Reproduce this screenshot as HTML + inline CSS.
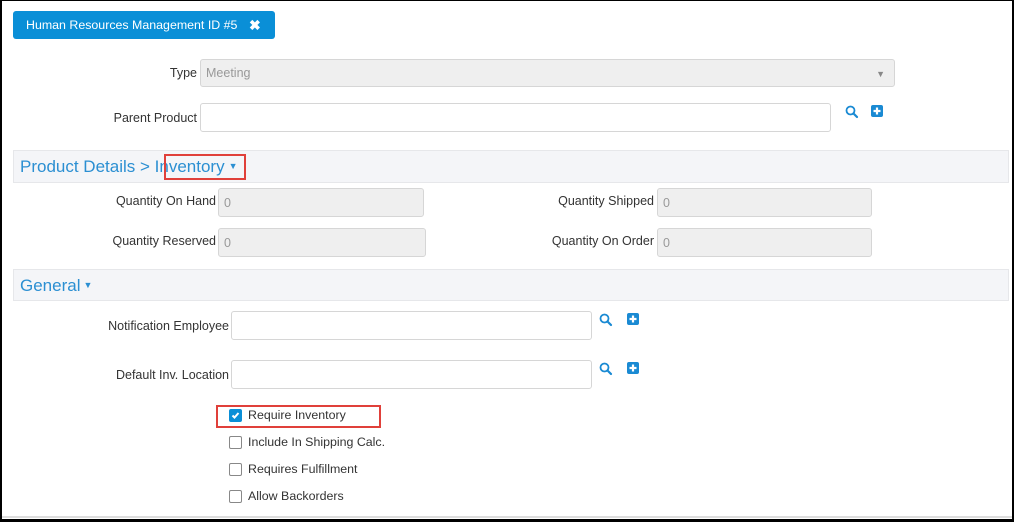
<!DOCTYPE html>
<html><head><style>
*{box-sizing:border-box;margin:0;padding:0}
body{width:1014px;height:522px;background:#fff;position:relative;overflow:hidden;font-family:"Liberation Sans",sans-serif;font-size:12px;color:#333}
.a{position:absolute}
.lbl{position:absolute;text-align:right;white-space:nowrap;font-size:12.5px;color:#333}
.inp{position:absolute;border:1px solid #d6d6d6;border-radius:3px;background:#fff}
.dis{background:#efefef;color:#999;padding-left:5px;font-size:12.5px;display:flex;align-items:center}
.bar{position:absolute;left:13px;width:996px;background:#f4f5f8;border:1px solid #e6e7ea}
.bt{color:#2b8fd2;font-size:17px;position:absolute;left:6px;white-space:nowrap}
.cb{position:absolute;left:229px;width:13px;height:13px;border:1px solid #888;border-radius:2px;background:#fff}
.cl{position:absolute;left:248px;font-size:12.4px;color:#333;white-space:nowrap}
.red{position:absolute;border:2px solid #e0403a}
</style></head><body>
<div class="a" style="left:0;top:0;width:1014px;height:522px;border:1px solid #000;border-left-width:2px;border-right-width:2px;border-bottom-width:3px"></div>
<div class="a" style="left:2px;top:516px;width:1010px;height:2px;background:#ddd"></div>

<div class="a" style="left:13px;top:11px;width:262px;height:28px;background:#0a8fd7;border-radius:3px;color:#fff;font-size:12.4px;line-height:28px;padding-left:13px;white-space:nowrap">Human Resources Management ID #5<span style="position:absolute;left:236px;font-weight:bold;font-size:14px">✖</span></div>

<div class="lbl" style="right:817px;top:66px">Type</div>
<div class="inp dis" style="left:200px;top:59px;width:695px;height:28px">Meeting<span style="position:absolute;right:9px;top:9px;font-size:9px;color:#888">▼</span></div>

<div class="lbl" style="right:817px;top:111px">Parent Product</div>
<div class="inp" style="left:200px;top:103px;width:631px;height:29px"></div>
<svg class="a" style="left:845px;top:105px" width="14" height="14" viewBox="0 0 14 14"><circle cx="5.5" cy="5.5" r="4" fill="none" stroke="#1a8ad3" stroke-width="1.8"/><path d="M8.5 8.5l3.5 3.5" stroke="#1a8ad3" stroke-width="2.2" stroke-linecap="round"/></svg>
<svg class="a" style="left:871px;top:105px" width="12" height="12" viewBox="0 0 12 12"><rect width="12" height="12" rx="2" fill="#1a8ad3"/><path d="M6 2.5v7M2.5 6h7" stroke="#fff" stroke-width="2.2"/></svg>

<div class="bar" style="top:150px;height:33px"><span class="bt" style="top:6px">Product Details &gt; Inventory<span style="font-size:9px;position:relative;top:-3px;margin-left:4px">▼</span></span></div>
<div class="red" style="left:164px;top:154px;width:82px;height:26px"></div>

<div class="lbl" style="right:798px;top:194px">Quantity On Hand</div>
<div class="inp dis" style="left:218px;top:188px;width:206px;height:29px">0</div>
<div class="lbl" style="right:360px;top:194px">Quantity Shipped</div>
<div class="inp dis" style="left:657px;top:188px;width:215px;height:29px">0</div>
<div class="lbl" style="right:798px;top:234px">Quantity Reserved</div>
<div class="inp dis" style="left:218px;top:228px;width:208px;height:29px">0</div>
<div class="lbl" style="right:360px;top:234px">Quantity On Order</div>
<div class="inp dis" style="left:657px;top:228px;width:215px;height:29px">0</div>

<div class="bar" style="top:269px;height:32px"><span class="bt" style="top:6px">General<span style="font-size:9px;position:relative;top:-3px;margin-left:3px">▼</span></span></div>

<div class="lbl" style="right:785px;top:319px">Notification Employee</div>
<div class="inp" style="left:231px;top:311px;width:361px;height:29px"></div>
<svg class="a" style="left:599px;top:313px" width="14" height="14" viewBox="0 0 14 14"><circle cx="5.5" cy="5.5" r="4" fill="none" stroke="#1a8ad3" stroke-width="1.8"/><path d="M8.5 8.5l3.5 3.5" stroke="#1a8ad3" stroke-width="2.2" stroke-linecap="round"/></svg>
<svg class="a" style="left:627px;top:313px" width="12" height="12" viewBox="0 0 12 12"><rect width="12" height="12" rx="2" fill="#1a8ad3"/><path d="M6 2.5v7M2.5 6h7" stroke="#fff" stroke-width="2.2"/></svg>

<div class="lbl" style="right:785px;top:368px">Default Inv. Location</div>
<div class="inp" style="left:231px;top:360px;width:361px;height:29px"></div>
<svg class="a" style="left:599px;top:362px" width="14" height="14" viewBox="0 0 14 14"><circle cx="5.5" cy="5.5" r="4" fill="none" stroke="#1a8ad3" stroke-width="1.8"/><path d="M8.5 8.5l3.5 3.5" stroke="#1a8ad3" stroke-width="2.2" stroke-linecap="round"/></svg>
<svg class="a" style="left:627px;top:362px" width="12" height="12" viewBox="0 0 12 12"><rect width="12" height="12" rx="2" fill="#1a8ad3"/><path d="M6 2.5v7M2.5 6h7" stroke="#fff" stroke-width="2.2"/></svg>

<div class="cb" style="top:409px;background:#0a8fd7;border-color:#0a8fd7"><svg width="11" height="11" viewBox="0 0 11 11" style="position:absolute;left:0;top:0"><path d="M2.5 5.5l2 2 4-4.5" stroke="#fff" stroke-width="2" fill="none"/></svg></div>
<div class="cl" style="top:408px">Require Inventory</div>
<div class="red" style="left:216px;top:405px;width:165px;height:23px"></div>
<div class="cb" style="top:436px"></div><div class="cl" style="top:435px">Include In Shipping Calc.</div>
<div class="cb" style="top:463px"></div><div class="cl" style="top:462px">Requires Fulfillment</div>
<div class="cb" style="top:490px"></div><div class="cl" style="top:489px">Allow Backorders</div>
</body></html>
